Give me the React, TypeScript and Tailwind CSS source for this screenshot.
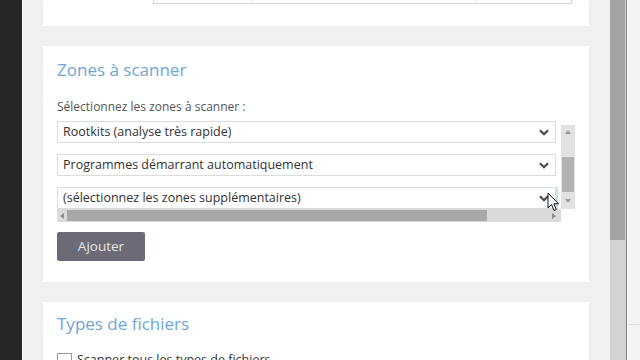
import { ReactNode } from 'react'

function Chevron() {
  return (
    <svg width="10" height="7" viewBox="0 0 10 7" className="shrink-0">
      <path d="M1 1.2 L5 5.2 L9 1.2" fill="none" stroke="#4a4a4a" strokeWidth="2.2" />
    </svg>
  )
}

function Select({ children, focused }: { children: ReactNode; focused?: boolean }) {
  return (
    <div
      className={`flex h-[22px] items-center justify-between border border-[#dcdcdc] bg-white pl-[5px] pr-[6px] text-[12.5px] text-[#333] ${
        focused ? 'shadow-[2px_0_0_0_#bfe3ee]' : ''
      }`}
    >
      <span className="truncate">{children}</span>
      <Chevron />
    </div>
  )
}

function Card({ children, className = '' }: { children: ReactNode; className?: string }) {
  return (
    <section className={`bg-white px-[14px] shadow-[0_0_5px_rgba(0,0,0,0.04)] ${className}`}>
      {children}
    </section>
  )
}

export default function App() {
  return (
    <div className="flex h-[360px] w-[640px] overflow-hidden font-['Open_Sans',sans-serif]">
      {/* dark left edge */}
      <div className="w-[22px] shrink-0 bg-[#262626]" />

      <main className="flex w-[588px] shrink-0 flex-col gap-[20px] border-l border-[#fafafa] bg-[#f1f1f3] pl-[20px] pr-[21px]">
        {/* previous card, cut at the top */}
        <Card className="h-[26px] shrink-0">
          <div className="ml-[96px] mr-[3px] flex h-[4px] border-x border-b border-[#d6d6d6]">
            <div className="w-[98px] border-r border-[#ececec]" />
            <div className="w-[224px] border-r border-[#ececec]" />
          </div>
        </Card>

        <Card className="shrink-0 pt-[12px] pb-[21px]">
          <h2 className="text-[17px] leading-[24px] text-[#6fa5d4]">Zones à scanner</h2>
          <p className="mt-[16px] text-[12px] leading-[17px] text-[#555]">Sélectionnez les zones à scanner :</p>

          <div className="relative mt-[6px]">
            <div className="flex gap-[5px]">
              <div className="flex w-[499px] flex-col gap-[11px]">
                <Select>Rootkits (analyse très rapide)</Select>
                <Select>Programmes démarrant automatiquement</Select>
                <Select focused>(sélectionnez les zones supplémentaires)</Select>
              </div>
              {/* vertical scrollbar */}
              <div className="mt-[4px] flex w-[14px] flex-col items-center bg-[#e2e2e2]">
                <svg width="8" height="12" viewBox="0 0 8 12" className="mt-[1px]">
                  <path d="M1 8 L4 4 L7 8 Z" fill="#9a9a9a" />
                </svg>
                <div className="mt-[19px] h-[35px] w-[12px] bg-[#b2b2b2]" />
                <svg width="8" height="12" viewBox="0 0 8 12" className="mt-[3px]">
                  <path d="M1 4 L4 8 L7 4 Z" fill="#9a9a9a" />
                </svg>
              </div>
            </div>

            {/* horizontal scrollbar */}
            <div className="flex h-[13px] w-[504px] items-center bg-[#dadada]">
              <svg width="10" height="10" viewBox="0 0 10 10" className="shrink-0">
                <path d="M7 2 L3 5 L7 8 Z" fill="#8c8c8c" />
              </svg>
              <div className="h-[11px] w-[420px] bg-[#a8a8a8]" />
              <div className="flex-1" />
              <svg width="10" height="10" viewBox="0 0 10 10" className="mr-[2px] shrink-0">
                <path d="M3 2 L7 5 L3 8 Z" fill="#8c8c8c" />
              </svg>
            </div>

            {/* mouse pointer */}
            <svg width="13" height="20" viewBox="0 0 13 20" className="absolute left-[490px] top-[71px]">
              <path d="M1 1 L1 16 L4.5 12.5 L7 18.5 L9.2 17.5 L6.8 11.8 L11.5 11.8 Z" fill="#fff" stroke="#111" strokeWidth="1" strokeLinejoin="round" />
            </svg>
          </div>

          <button className="mt-[10px] h-[29px] w-[88px] rounded-[2px] bg-[#6b6a76] text-[13.5px] text-[#e6e6ea]">
            Ajouter
          </button>
        </Card>

        <Card className="shrink-0 pt-[10px] pb-[20px]">
          <h2 className="text-[17px] leading-[24px] text-[#6fa5d4]">Types de fichiers</h2>
          <label className="mt-[15px] flex items-center gap-[5px] text-[12.5px] text-[#333]">
            <span className="h-[15px] w-[15px] border border-[#9a9a9a] bg-white" />
            Scanner tous les types de fichiers
          </label>
        </Card>
      </main>

      {/* page scrollbar */}
      <div className="flex w-[17px] shrink-0 flex-col border-r border-[#7c7c7c] bg-[#d3d3d3]">
        <div className="h-[240px] w-[15px] bg-[#a3a3a3]" />
      </div>

      <div className="flex w-[13px] shrink-0 flex-col border-l border-white bg-[#f3f3f6]">
        <div className="h-[325px] border-b border-[#dedee2]" />
      </div>
    </div>
  )
}
